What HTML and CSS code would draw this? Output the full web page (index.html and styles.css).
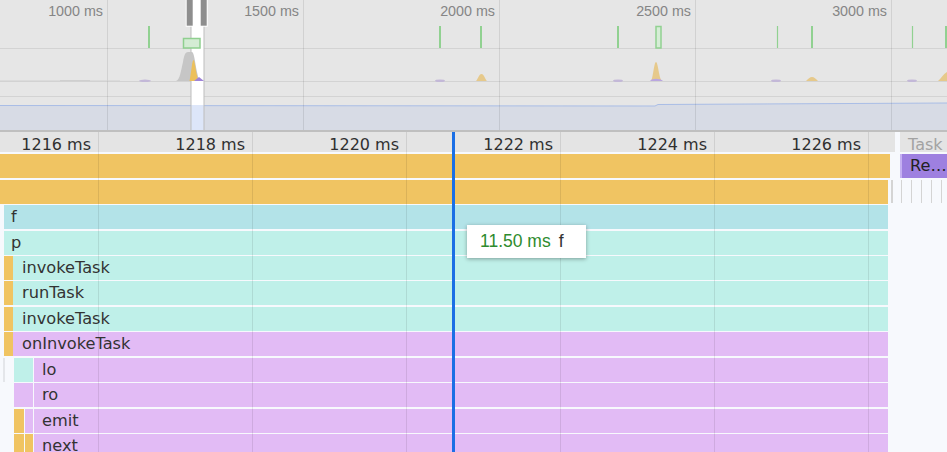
FILE: index.html
```html
<!DOCTYPE html>
<html>
<head>
<meta charset="utf-8">
<link rel="stylesheet" href="styles.css">
</head>
<body>
<div class="overview">
  <svg class="ov-chart" width="947" height="130" viewBox="0 0 947 130">
    <path d="M0 105.5 L655 106 L658 104.5 L947 103 L947 130 L0 130 Z" fill="#d7dbe5"/>
    <path d="M0 105.5 L655 106 L658 104.5 L947 103" fill="none" stroke="#a9bde6" stroke-width="1"/>
    <g stroke="#d3d3d3" stroke-width="1">
      <line x1="0" y1="48.5" x2="947" y2="48.5"/>
      <line x1="0" y1="81.5" x2="947" y2="81.5"/>
      <line x1="0" y1="96.5" x2="947" y2="96.5"/>
    </g>
    <g stroke="rgba(0,0,0,0.09)" stroke-width="1">
      <line x1="107.5" y1="0" x2="107.5" y2="130"/>
      <line x1="303.5" y1="0" x2="303.5" y2="130"/>
      <line x1="499.5" y1="0" x2="499.5" y2="130"/>
      <line x1="695.5" y1="0" x2="695.5" y2="130"/>
      <line x1="891.5" y1="0" x2="891.5" y2="130"/>
    </g>
    <!-- selection strip -->
    <rect x="191" y="0" width="13" height="130" fill="#ffffff"/>
    <rect x="191" y="105" width="13" height="25" fill="#dde6f9"/>
    <line x1="191" y1="0" x2="191" y2="130" stroke="#bdbdbd" stroke-width="1"/>
    <line x1="204" y1="0" x2="204" y2="130" stroke="#bdbdbd" stroke-width="1"/>
    <!-- cpu peaks -->
    <path d="M176 81 C180 80 181 70 183 62 C184 56 185 52 188 52 L192 52 C194 52 195 62 197 72 L199 81 Z" fill="#c6c6c6"/>
    <path d="M189.5 81 C191 76 192 60 193.5 60 C195 60 196 76 199 81 Z" fill="#ecc05a"/>
    <path d="M194 81 L199 77 L204 81 Z" fill="#9f84d8"/>
    <path d="M476 81 C478 79 479 74 481.5 74 C484 74 485 79 487 81 Z" fill="#e6c98b"/>
    <path d="M651 81 C653 79 654 62 656 62 C658 62 659 79 662 81 Z" fill="#e6c98b"/>
    <path d="M650 81 C652 78 660 78 663 81 Z" fill="#b9a6e0"/>
    <path d="M806 81 C808 79 810 77 812 77 C814 77 816 79 818 81 Z" fill="#e6c98b"/>
    <path d="M938 81 C941 79 943 74 947 72 L947 81 Z" fill="#e6c98b"/>
    <g fill="#c3b8d8">
      <ellipse cx="145" cy="80.8" rx="6" ry="1.3"/>
      <ellipse cx="440" cy="80.8" rx="5" ry="1.2"/>
      <ellipse cx="618" cy="80.8" rx="5" ry="1.2"/>
      <ellipse cx="776" cy="80.8" rx="5" ry="1.3"/>
      <ellipse cx="912" cy="80.8" rx="5" ry="1.2"/>
    </g>
    <g fill="#cfcfcf">
      <rect x="0" y="80.5" width="120" height="0.8"/>
      <rect x="60" y="80" width="30" height="1.2"/>
    </g>
    <!-- green markers -->
    <g stroke="#91d191" stroke-width="2">
      <line x1="149" y1="26" x2="149" y2="48"/>
      <line x1="440" y1="26" x2="440" y2="48"/>
      <line x1="481" y1="26" x2="481" y2="48"/>
      <line x1="618" y1="26" x2="618" y2="48"/>
      <line x1="812" y1="26" x2="812" y2="48"/>
      <line x1="946" y1="26" x2="946" y2="48"/>
    </g>
    <g stroke="#91d191" stroke-width="1.2">
      <line x1="777.5" y1="26" x2="777.5" y2="48"/>
      <line x1="912.5" y1="26" x2="912.5" y2="48"/>
    </g>
    <rect x="656" y="26.5" width="5" height="21.5" fill="#d6edd6" stroke="#91d191" stroke-width="1.5"/>
    <rect x="183.5" y="38.5" width="16.5" height="9.5" fill="#d4ecd4" stroke="#8fcf8f" stroke-width="1.5"/>
    <!-- handles -->
    <rect x="185.7" y="0" width="22" height="26.7" fill="#ffffff"/>
    <rect x="186.7" y="0" width="6" height="25.7" fill="#8e8e8e"/>
    <rect x="200.7" y="0" width="6" height="25.7" fill="#8e8e8e"/>
  </svg>
  <div class="ov-labels">
    <div class="ov-cell">1000 ms</div>
    <div class="ov-cell">1500 ms</div>
    <div class="ov-cell">2000 ms</div>
    <div class="ov-cell">2500 ms</div>
    <div class="ov-cell">3000 ms</div>
    <div class="ov-cell"></div>
  </div>
</div>

<div class="flame">
  <div class="flame-main">
    <div class="ruler">
      <div class="r-cell">1216 ms</div>
      <div class="r-cell">1218 ms</div>
      <div class="r-cell">1220 ms</div>
      <div class="r-cell">1222 ms</div>
      <div class="r-cell">1224 ms</div>
      <div class="r-cell">1226 ms</div>
      <div class="r-cell"></div>
    </div>
    <div class="rows">
      <div class="row"><div class="seg orange w890"></div></div>
      <div class="row"><div class="seg orange w888"></div><div class="tick"></div></div>
      <div class="row"><div class="sp4"></div><div class="seg cyan w884 lab1">f</div></div>
      <div class="row"><div class="sp4"></div><div class="seg mint w884 lab1">p</div></div>
      <div class="row"><div class="sp4"></div><div class="seg orange w9"></div><div class="seg mint w875 lab2">invokeTask</div></div>
      <div class="row"><div class="sp4"></div><div class="seg orange w9"></div><div class="seg mint w875 lab2">runTask</div></div>
      <div class="row"><div class="sp4"></div><div class="seg orange w9"></div><div class="seg mint w875 lab2">invokeTask</div></div>
      <div class="row"><div class="sp4"></div><div class="seg orange w9"></div><div class="seg purple w875 lab2">onInvokeTask</div></div>
      <div class="row"><div class="sp14 marked"></div><div class="seg mint w19"></div><div class="seg purple w854 lab3">lo</div></div>
      <div class="row"><div class="sp14"></div><div class="seg purple w19"></div><div class="seg purple w854 lab3">ro</div></div>
      <div class="row"><div class="sp14"></div><div class="seg orange w10"></div><div class="seg purple w8"></div><div class="seg purple w854 lab3">emit</div></div>
      <div class="row"><div class="sp14"></div><div class="seg orange w10"></div><div class="seg orange w8"></div><div class="seg purple w854 lab3">next</div></div>
    </div>
    <div class="grid"></div>
  </div>
  <div class="task-col">
    <div class="task-head">Task</div>
    <div class="task-bar">Re…</div>
    <div class="task-ticks"></div>
  </div>
  <div class="cursor"></div>
  <div class="tooltip"><span class="tt-time">11.50 ms</span><span class="tt-name">f</span></div>
</div>
</body>
</html>
```
FILE: styles.css
```css
* { box-sizing: border-box; }
html, body {
  margin: 0;
  padding: 0;
  width: 947px;
  height: 452px;
  overflow: hidden;
  background: #f7f9fd;
}

.overview {
  position: relative;
  height: 132px;
  background: #e6e6e6;
  border-bottom: 2px solid #bfbfbf;
  overflow: hidden;
}
.ov-chart {
  position: absolute;
  left: 0;
  top: 0;
  display: block;
}
.ov-labels {
  position: relative;
  display: flex;
  margin-left: -89px;
  height: 20px;
}
.ov-cell {
  flex: 0 0 196px;
  text-align: right;
  padding-right: 4px;
  padding-top: 1px;
  font-family: "Liberation Sans", Arial, sans-serif;
  font-size: 14.3px;
  line-height: 20px;
  color: #858585;
  white-space: nowrap;
}

.flame {
  position: relative;
  display: flex;
  height: 320px;
  overflow: hidden;
  font-family: "DejaVu Sans", Verdana, sans-serif;
  font-size: 16.2px;
  color: #333;
}
.flame-main {
  position: relative;
  flex: 0 0 895px;
  overflow: hidden;
}
.ruler {
  display: flex;
  margin-left: -55px;
  height: 20px;
  background: #e4e4e4;
}
.r-cell {
  flex: 0 0 154px;
  height: 20px;
  border-right: 1px solid #cfcfcf;
  text-align: right;
  padding-right: 7px;
  padding-top: 2.5px;
  font-size: 16px;
  line-height: 20px;
  white-space: nowrap;
  color: #303030;
}
.rows {
  display: flex;
  flex-direction: column;
  gap: 1.45px;
  margin-top: 2.3px;
}
.row {
  display: flex;
  height: 24px;
}
.seg {
  height: 24px;
  line-height: 24px;
  white-space: nowrap;
  overflow: hidden;
  margin-right: 1px;
}
.seg:last-child { margin-right: 0; }
.orange { background: #f0c462; }
.cyan { background: #b3e3e8; }
.mint { background: #bff0e9; }
.purple { background: #e2bbf5; }

.w890 { width: 890px; }
.w888 { width: 888px; }
.w884 { width: 884px; }
.w875 { width: 875px; }
.w854 { width: 854px; }
.w19 { width: 19px; }
.w10 { width: 10px; }
.w9 { width: 9px; margin-right: 0; }
.w8 { width: 8px; }

.sp4 { flex: 0 0 4px; }
.sp14 { flex: 0 0 14px; }
.marked { border-left: 2px solid #e4e6ea; margin-left: 3px; flex-basis: 11px; }

.lab1 { padding-left: 7px; }
.lab2 { padding-left: 9px; }
.lab3 { padding-left: 8px; }

.tick {
  width: 1.5px;
  height: 23px;
  margin-left: 2px;
  background: #d4d4d4;
}

.grid {
  position: absolute;
  left: 0;
  right: 0;
  top: 20px;
  bottom: 0;
  background-image: repeating-linear-gradient(to right, transparent 0 98px, rgba(0,0,0,0.09) 98px 99px, transparent 99px 154px);
  pointer-events: none;
}

.task-col {
  flex: 1;
  margin-left: 5px;
}
.task-head {
  height: 20px;
  background: #e4e4e4;
  color: #a2a2a2;
  padding-left: 8px;
  padding-top: 2.5px;
  font-size: 16px;
  line-height: 20px;
  white-space: nowrap;
  overflow: hidden;
}
.task-bar {
  margin-top: 2.3px;
  height: 24px;
  line-height: 24px;
  background: #9e80e0;
  border-left: 2px solid #c5b0f2;
  padding-left: 8px;
  color: #222;
  white-space: nowrap;
  overflow: hidden;
}
.task-ticks {
  margin-top: 1.45px;
  height: 23px;
  background-image: repeating-linear-gradient(to right, transparent 0 1px, #d4d4d4 1px 2px, transparent 2px 10px);
}

.cursor {
  position: absolute;
  left: 452px;
  top: 0;
  width: 3px;
  height: 100%;
  background: #1b6fe5;
  z-index: 3;
}
.tooltip {
  position: absolute;
  left: 467px;
  top: 93px;
  width: 119px;
  height: 33px;
  background: #ffffff;
  box-shadow: 0 1px 4px rgba(0,0,0,0.35);
  padding-left: 13px;
  line-height: 33px;
  font-family: "Liberation Sans", Arial, sans-serif;
  font-size: 17.5px;
  white-space: nowrap;
  z-index: 4;
}
.tt-time { color: #2e8b2e; }
.tt-name { color: #333; margin-left: 8px; }
```
